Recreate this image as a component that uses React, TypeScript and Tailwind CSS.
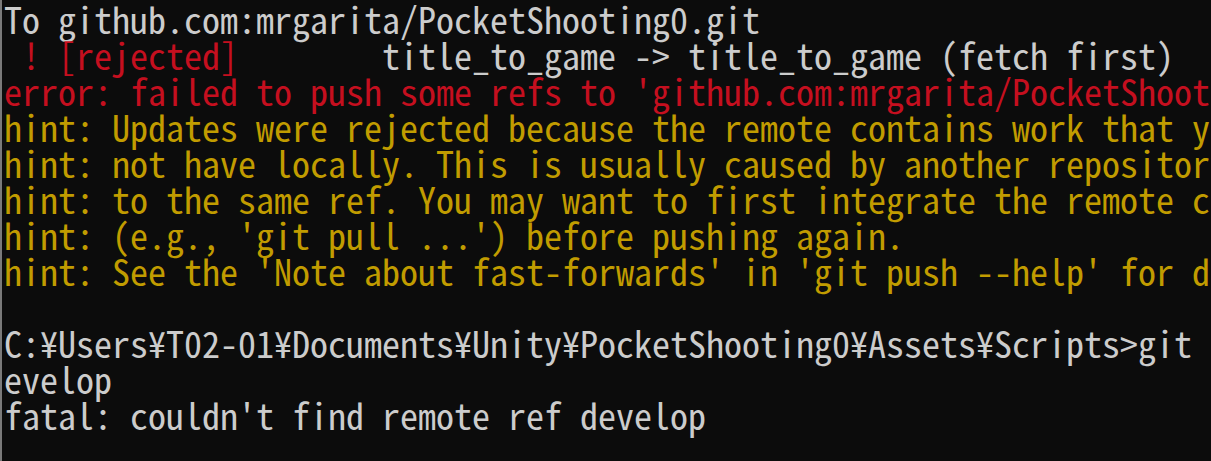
import React from "react";

type Line = { text: string; color: string };

const W = "text-[#cccccc]";
const R = "text-[#c50f1f]";
const Y = "text-[#c19c00]";

const lines: Line[] = [
  { text: "To github.com:mrgarita/PocketShooting0.git", color: W },
  { text: " ! [rejected]        ", color: R },
  { text: "error: failed to push some refs to 'github.com:mrgarita/PocketShooting0.git'", color: R },
  { text: "hint: Updates were rejected because the remote contains work that you do", color: Y },
  { text: "hint: not have locally. This is usually caused by another repository pushing", color: Y },
  { text: "hint: to the same ref. You may want to first integrate the remote changes", color: Y },
  { text: "hint: (e.g., 'git pull ...') before pushing again.", color: Y },
  { text: "hint: See the 'Note about fast-forwards' in 'git push --help' for details.", color: Y },
  { text: "", color: W },
  { text: "C:¥Users¥T02-01¥Documents¥Unity¥PocketShooting0¥Assets¥Scripts>git pull origin d", color: W },
  { text: "evelop", color: W },
  { text: "fatal: couldn't find remote ref develop", color: W },
];

export default function App() {
  return (
    <div className="w-[1211px] h-[461px] bg-[#0c0c0c] overflow-hidden flex border-l-2 border-[#7a7a7a]">
      <div
        className="pl-[2px] flex flex-col text-[36px] leading-[36px] whitespace-pre"
        style={{ fontFamily: '"Noto Sans Mono CJK JP", "Noto Sans CJK JP", "DejaVu Sans Mono", monospace' }}
      >
        {lines.map((l, i) =>
          i === 1 ? (
            <div key={i} className="h-[36px] flex">
              <span className={R}>{l.text}</span>
              <span className={W}>title_to_game -&gt; title_to_game (fetch first)</span>
            </div>
          ) : (
            <div key={i} className={`h-[36px] ${l.color}`}>
              {l.text}
            </div>
          )
        )}
      </div>
    </div>
  );
}
